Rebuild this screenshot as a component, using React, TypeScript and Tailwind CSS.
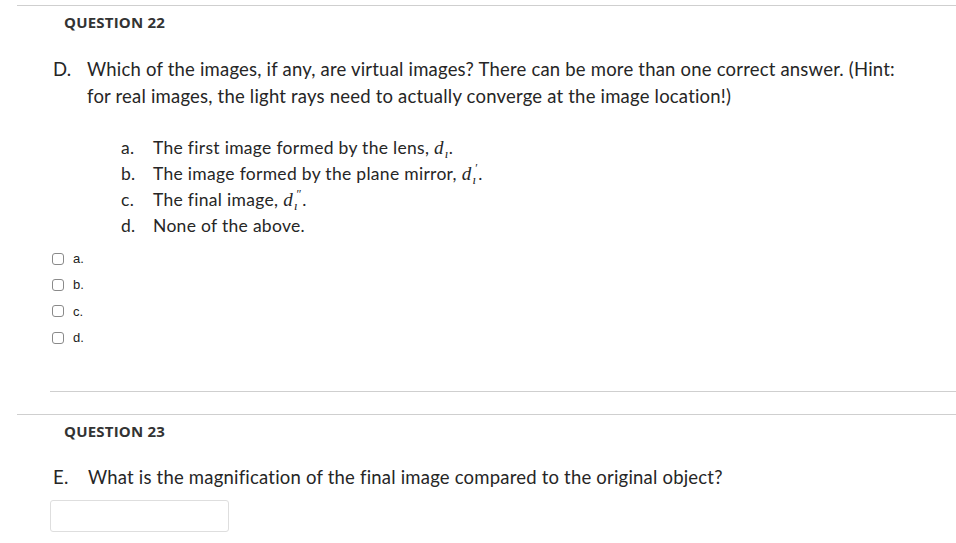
import React from 'react';

const body = { fontFamily: 'Lato, "Open Sans", sans-serif' };
const serif = { fontFamily: '"Liberation Serif", "DejaVu Serif", serif' };

// d with an italic dotless-i subscript and optional primes above it
const Di: React.FC<{ marks?: string }> = ({ marks }) => (
  <span className="whitespace-nowrap leading-[0]" style={serif}>
    <i className="text-[19px]">d</i>
    <i className="relative top-[4px] ml-[1px] text-[13px]">ı</i>
    {marks && <i className="relative -top-[8px] -ml-[2px] mr-[1px] text-[12px]">{marks}</i>}
  </span>
);

const options = [
  { k: 'a.', t: <>The first image formed by the lens, <Di />.</> },
  { k: 'b.', t: <>The image formed by the plane mirror, <Di marks="′" />.</> },
  { k: 'c.', t: <>The final image, <Di marks="″" />.</> },
  { k: 'd.', t: <>None of the above.</> },
];

const Heading: React.FC<{ n: number }> = ({ n }) => (
  <div className="pl-[64px] text-[15px] font-bold text-[#333] tracking-[0.2px]" style={{ fontFamily: '"Open Sans", sans-serif' }}>
    QUESTION {n}
  </div>
);

export default function App() {
  return (
    <div className="w-[956px] h-[543px] overflow-hidden bg-white text-[#262626]" style={body}>
      <div className="h-[5px]" />
      <div className="ml-[17px] border-t border-[#cfcfcf]" />
      <div className="pt-[5px]"><Heading n={22} /></div>

      <div className="mt-[22px] ml-[53px] flex text-[18.5px] leading-[27px] tracking-[0.2px]">
        <span className="w-[34px] shrink-0">D.</span>
        <p>
          Which of the images, if any, are virtual images? There can be more than one correct answer. (Hint:
          <br />
          for real images, the light rays need to actually converge at the image location!)
        </p>
      </div>

      <div className="mt-[25px] ml-[121px] flex flex-col text-[17.5px] leading-[26.3px] tracking-[0.3px]">
        {options.map((o) => (
          <div key={o.k} className="flex h-[26.3px]">
            <span className="w-[32px] shrink-0">{o.k}</span>
            <span>{o.t}</span>
          </div>
        ))}
      </div>

      <div className="mt-[6px] ml-[52px] flex flex-col" style={{ fontFamily: '"Liberation Sans", Arial, sans-serif' }}>
        {['a.', 'b.', 'c.', 'd.'].map((l) => (
          <label key={l} className="flex items-center h-[26.3px] text-[13px] text-[#222]">
            <span className="w-[12px] h-[12px] rounded-[3px] border border-[#8a8a8a] bg-white" />
            <span className="ml-[9px]">{l}</span>
          </label>
        ))}
      </div>

      <div className="mt-[40px] ml-[50px] border-t border-[#cfcfcf]" />
      <div className="mt-[22px] ml-[17px] border-t border-[#cfcfcf]" />
      <div className="pt-[5px]"><Heading n={23} /></div>

      <div className="mt-[22px] ml-[53px] flex text-[18.5px] leading-[27px] tracking-[0.2px]">
        <span className="w-[35px] shrink-0">E.</span>
        <p>What is the magnification of the final image compared to the original object?</p>
      </div>

      <div className="mt-[9px] ml-[50px] w-[179px] h-[32px] rounded-[3px] border border-[#dedede] bg-white" />
    </div>
  );
}
